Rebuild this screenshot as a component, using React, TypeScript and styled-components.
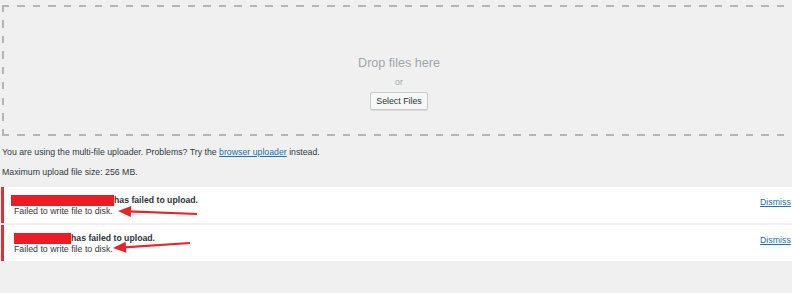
import React from "react";
import styled, { createGlobalStyle } from "styled-components";

const Global = createGlobalStyle`
  html, body { margin: 0; padding: 0; background: #f0f0f1; }
  body { font-family: "Liberation Sans", Arial, sans-serif; color: #3c434a; overflow: hidden; }
  * { box-sizing: border-box; }
`;

const Page = styled.div`
  width: 792px;
  height: 293px;
  padding: 5px 0 0 2px;
  overflow: hidden;
`;

const dash = "#b2b5b9";

const DropZone = styled.div`
  width: 794px;
  height: 131px;
  display: flex;
  flex-direction: column;
  align-items: center;
  padding-top: 49px;
  background-image:
    repeating-linear-gradient(to right, ${dash} 0 7px, transparent 7px 15.5px),
    repeating-linear-gradient(to right, ${dash} 0 7px, transparent 7px 15.5px),
    repeating-linear-gradient(to bottom, ${dash} 0 7px, transparent 7px 15.5px),
    repeating-linear-gradient(to bottom, ${dash} 0 7px, transparent 7px 15.5px);
  background-size: 100% 2px, 100% 2px, 2px 100%, 2px 100%;
  background-position: left top, left bottom, left top, right top;
  background-repeat: no-repeat;
`;

const DropTitle = styled.div`
  font-size: 12.6px;
  color: #a2a6ab;
  line-height: 16px;
  margin-top: 1px;
`;

const Or = styled.div`
  font-size: 8.8px;
  color: #a2a6ab;
  margin-top: 6px;
  line-height: 11px;
`;

const SelectButton = styled.button`
  margin-top: 4px;
  width: 58px;
  height: 18px;
  padding: 0;
  font-family: inherit;
  font-size: 8.8px;
  color: #2c3338;
  background: #f6f7f7;
  border: 1px solid #c8cacc;
  border-radius: 2px;
  box-shadow: 0 1px 0 #dcdcde;
`;

const Info = styled.p`
  margin: 0;
  font-size: 8.75px;
  line-height: 11px;
  color: #32383e;
`;

const InfoFirst = styled(Info)`
  margin-top: 11px;
`;

const InfoSecond = styled(Info)`
  margin-top: 9px;
`;

const Link = styled.a`
  color: #2271b1;
  text-decoration: underline;
`;

const Notices = styled.div`
  margin-top: 9px;
  margin-left: -1px;
  display: flex;
  flex-direction: column;
  gap: 2px;
  width: 800px;
`;

const Notice = styled.div`
  position: relative;
  height: 36px;
  background: #fff;
  border-left: 3px solid #d63638;
  display: flex;
  padding: 8px 0 0 0;
`;

const NoticeBody = styled.div<{ $indent: number }>`
  padding-left: ${(p) => p.$indent}px;
  display: flex;
  flex-direction: column;
  flex: 1;
`;

const Title = styled.div`
  display: flex;
  align-items: flex-end;
  font-size: 8.7px;
  font-weight: bold;
  line-height: 11px;
  color: #2c3338;
`;

const Redact = styled.span<{ $w: number }>`
  display: inline-block;
  width: ${(p) => p.$w}px;
  height: 11px;
  background: #ed1c24;
`;

const Message = styled.div<{ $shift: number }>`
  font-size: 8.8px;
  line-height: 11px;
  color: #32383e;
  margin-left: ${(p) => p.$shift}px;
`;

const Dismiss = styled.a`
  font-size: 8.8px;
  line-height: 11px;
  color: #2271b1;
  text-decoration: underline;
  margin-top: 2px;
  width: 41px;
`;

const Arrow = styled.svg`
  position: absolute;
  left: 0;
  top: 0;
  overflow: visible;
  pointer-events: none;
`;

type Row = {
  indent: number;
  w: number;
  shift: number;
  arrow: { x1: number; y1: number; x2: number; y2: number };
};

const rows: Row[] = [
  { indent: 7, w: 103, shift: 3, arrow: { x1: 193, y1: 27, x2: 114, y2: 24 } },
  { indent: 10, w: 57, shift: 0, arrow: { x1: 186, y1: 18, x2: 109, y2: 23 } },
];

function ArrowMark({ x1, y1, x2, y2 }: Row["arrow"]) {
  const ang = Math.atan2(y2 - y1, x2 - x1);
  const len = 13;
  const half = 5.5;
  const bx = x2 - len * Math.cos(ang);
  const by = y2 - len * Math.sin(ang);
  const px = -Math.sin(ang) * half;
  const py = Math.cos(ang) * half;
  return (
    <Arrow width="1" height="1">
      <line x1={x1} y1={y1} x2={bx + 2 * Math.cos(ang)} y2={by + 2 * Math.sin(ang)} stroke="#e8232a" strokeWidth="2.2" />
      <polygon points={`${x2},${y2} ${bx + px},${by + py} ${bx - px},${by - py}`} fill="#e8232a" />
    </Arrow>
  );
}

export default function App() {
  return (
    <Page>
      <Global />
      <DropZone>
        <DropTitle>Drop files here</DropTitle>
        <Or>or</Or>
        <SelectButton>Select Files</SelectButton>
      </DropZone>
      <InfoFirst>
        You are using the multi-file uploader. Problems? Try the <Link href="#">browser uploader</Link> instead.
      </InfoFirst>
      <InfoSecond>Maximum upload file size: 256 MB.</InfoSecond>
      <Notices>
        {rows.map((r, i) => (
          <Notice key={i}>
            <NoticeBody $indent={r.indent}>
              <Title>
                <Redact $w={r.w} />
                has failed to upload.
              </Title>
              <Message $shift={r.shift}>Failed to write file to disk.</Message>
            </NoticeBody>
            <Dismiss href="#">Dismiss</Dismiss>
            <ArrowMark {...r.arrow} />
          </Notice>
        ))}
      </Notices>
    </Page>
  );
}
